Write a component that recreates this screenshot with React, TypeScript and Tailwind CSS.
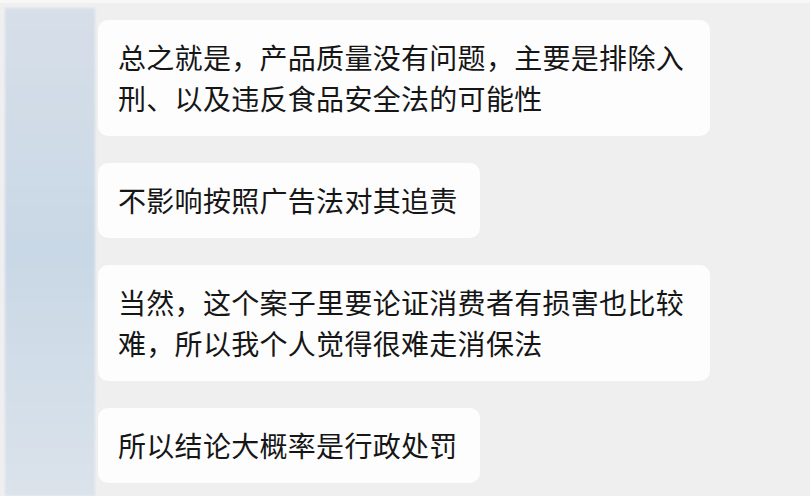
import React from 'react';

const messages: string[] = [
  '总之就是，产品质量没有问题，主要是排除入刑、以及违反食品安全法的可能性',
  '不影响按照广告法对其追责',
  '当然，这个案子里要论证消费者有损害也比较难，所以我个人觉得很难走消保法',
  '所以结论大概率是行政处罚',
];

const Bubble: React.FC<{ text: string }> = ({ text }) => (
  <div className="w-fit max-w-[612px] rounded-[10px] bg-[#fdfdfe] pl-[20px] pr-[22px] py-[17px] text-[28px] leading-[41px] tracking-[0.3px] text-[#161616]">
    {text}
  </div>
);

const App: React.FC = () => {
  return (
    <div
      className="h-[496px] w-[810px] overflow-hidden bg-[#efeff0]"
      style={{ fontFamily: '"Noto Sans CJK SC", "Noto Sans", sans-serif' }}
    >
      <div className="h-[3px] bg-[#f7f7f8]" />
      <div className="flex h-[493px] pl-[5px] pt-[5px]">
        {/* blurred avatar strip */}
        <div className="w-[90px] shrink-0 bg-gradient-to-b from-[#d7dfe9] via-[#c9d8e6] to-[#dbe3eb] blur-[1px]" />
        <div className="ml-[3px] flex flex-col items-start gap-[27px] pt-[12px]">
          {messages.map((m, i) => (
            <Bubble key={i} text={m} />
          ))}
        </div>
      </div>
    </div>
  );
};

export default App;
